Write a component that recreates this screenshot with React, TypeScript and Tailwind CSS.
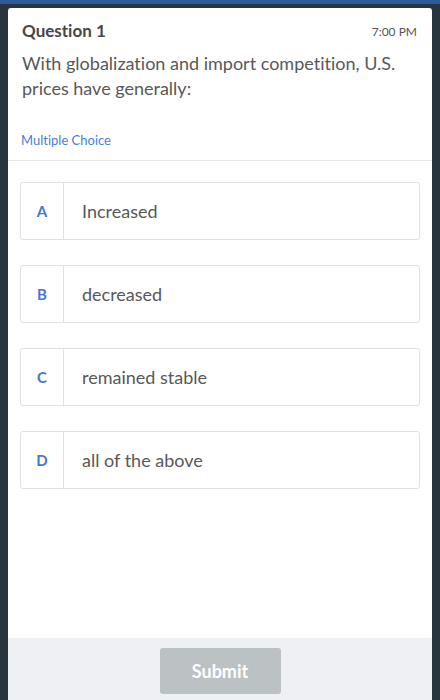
import React from "react";

const options = [
  { letter: "A", text: "Increased" },
  { letter: "B", text: "decreased" },
  { letter: "C", text: "remained stable" },
  { letter: "D", text: "all of the above" },
];

export default function App() {
  return (
    <div
      className="w-[440px] h-[700px] bg-[#28343e] overflow-hidden flex flex-col [font-variant-ligatures:none]"
      style={{ fontFamily: "Lato, 'Open Sans', sans-serif" }}
    >
      <div className="h-[4px] bg-[#2f5b9c] shrink-0" />
      <div className="mt-[4px] mx-[8px] flex-1 bg-white rounded-t-[3px] flex flex-col">
        <div className="px-[14px] pt-[12px] flex justify-between items-start">
          <div className="text-[17px] font-bold text-[#474747] leading-[22px]">Question 1</div>
          <div className="text-[12px] text-[#555] leading-[16px] pt-[4px] pr-[1px]">7:00 PM</div>
        </div>
        <div className="px-[14px] pt-[9px] text-[18px] leading-[25px] text-[#585858]">
          With globalization and import competition, U.S. prices have generally:
        </div>
        <div className="px-[13px] pt-[30px] pb-[11px] text-[13px] leading-[18px] text-[#4a7fd0]">
          Multiple Choice
        </div>
        <div className="h-px bg-[#e6e8ea]" />
        <div className="px-[12px] pt-[21px] flex flex-col gap-[25px]">
          {options.map((o) => (
            <div
              key={o.letter}
              className="h-[58px] border border-[#dfe1e3] rounded-[3px] flex items-stretch"
            >
              <div className="w-[43px] border-r border-[#dfe1e3] flex items-center justify-center text-[15px] font-bold text-[#3f78d4]">
                {o.letter}
              </div>
              <div className="pl-[18px] flex items-center text-[18px] text-[#585858]">{o.text}</div>
            </div>
          ))}
        </div>
        <div className="flex-1" />
        <div className="h-[62px] bg-[#eef0f3] flex justify-center pt-[10px]">
          <div className="w-[121px] h-[46px] rounded-[3px] bg-[#bcc1c4] text-white text-[18px] font-bold flex items-center justify-center">
            Submit
          </div>
        </div>
      </div>
    </div>
  );
}
